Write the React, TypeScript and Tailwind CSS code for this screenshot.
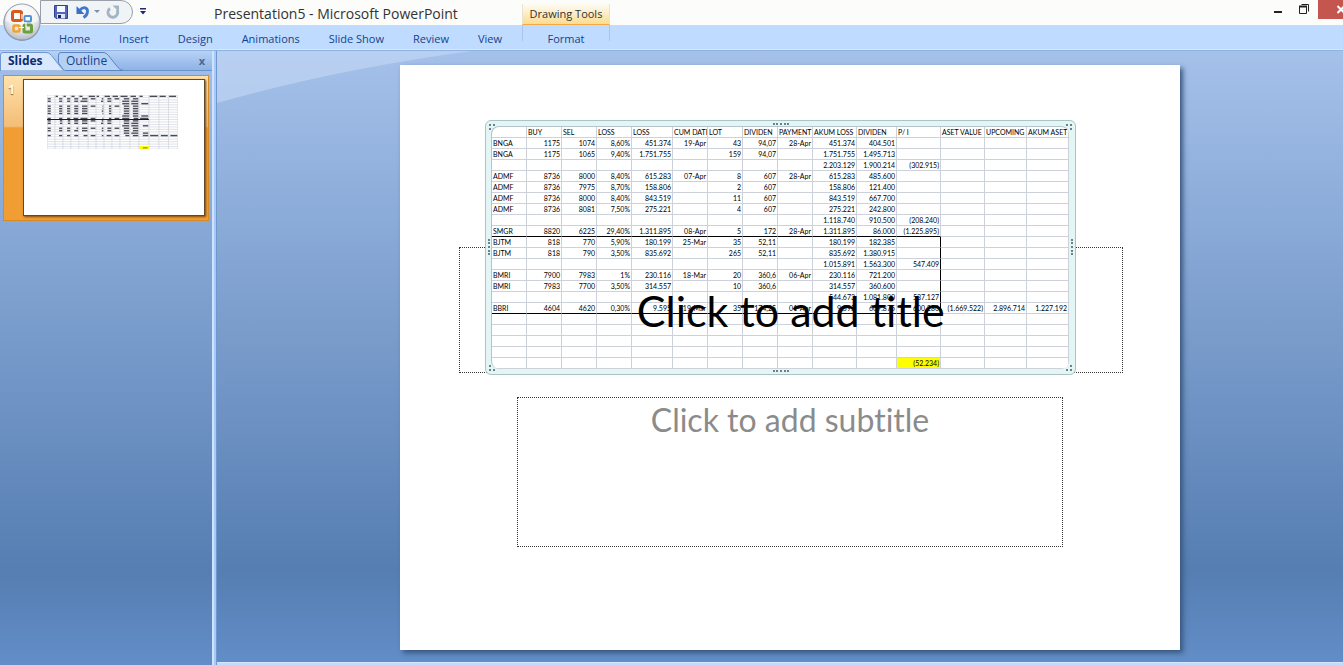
import React from 'react'

const menuTabs = ['Home', 'Insert', 'Design', 'Animations', 'Slide Show', 'Review', 'View']

const headers = [
  '', 'BUY', 'SEL', 'LOSS', 'LOSS', 'CUM DATE', 'LOT', 'DIVIDEN', 'PAYMENT',
  'AKUM LOSS', 'DIVIDEN', 'P/ I', 'ASET VALUE', 'UPCOMING', 'AKUM ASET',
]

const columnWidths = [35, 35, 35, 35, 41, 35, 35, 35, 35, 44, 40, 44, 44, 42, 42]

const rows: string[][] = [
  ['BNGA', '1175', '1074', '8,60%', '451.374', '19-Apr', '43', '94,07', '28-Apr', '451.374', '404.501'],
  ['BNGA', '1175', '1065', '9,40%', '1.751.755', '', '159', '94,07', '', '1.751.755', '1.495.713'],
  ['', '', '', '', '', '', '', '', '', '2.203.129', '1.900.214', '(302.915)'],
  ['ADMF', '8736', '8000', '8,40%', '615.283', '07-Apr', '8', '607', '28-Apr', '615.283', '485.600'],
  ['ADMF', '8736', '7975', '8,70%', '158.806', '', '2', '607', '', '158.806', '121.400'],
  ['ADMF', '8736', '8000', '8,40%', '843.519', '', '11', '607', '', '843.519', '667.700'],
  ['ADMF', '8736', '8081', '7,50%', '275.221', '', '4', '607', '', '275.221', '242.800'],
  ['', '', '', '', '', '', '', '', '', '1.118.740', '910.500', '(208.240)'],
  ['SMGR', '8820', '6225', '29,40%', '1.311.895', '08-Apr', '5', '172', '28-Apr', '1.311.895', '86.000', '(1.225.895)'],
  ['BJTM', '818', '770', '5,90%', '180.199', '25-Mar', '35', '52,11', '', '180.199', '182.385'],
  ['BJTM', '818', '790', '3,50%', '835.692', '', '265', '52,11', '', '835.692', '1.380.915'],
  ['', '', '', '', '', '', '', '', '', '1.015.891', '1.563.300', '547.409'],
  ['BMRI', '7900', '7983', '1%', '230.116', '18-Mar', '20', '360,6', '06-Apr', '230.116', '721.200'],
  ['BMRI', '7983', '7700', '3,50%', '314.557', '', '10', '360,6', '', '314.557', '360.600'],
  ['', '', '', '', '', '', '', '', '', '544.673', '1.081.800', '537.127'],
  ['BBRI', '4604', '4620', '0,30%', '9.595', '19-Mar', '35', '174,25', '01-Apr', '9.595', '609.875', '600.280', '(1.669.522)', '2.896.714', '1.227.192'],
  [],
  [],
  [],
  [],
  ['', '', '', '', '', '', '', '', '', '', '', '(52.234)'],
]

// the boxed block runs from below SMGR to below BBRI
const BOX_START = 8
const BOX_END = 15
const BOX_LAST_COLUMN = 11

function cellClass(row: number, col: number) {
  const inBox = col <= BOX_LAST_COLUMN
  const classes = ['h-[11px] overflow-hidden whitespace-nowrap border-b border-r px-px py-0']
  classes.push(col === 0 ? 'text-left' : 'text-right')
  classes.push(
    inBox && (row === BOX_START || row === BOX_END) ? 'border-b-black' : 'border-b-[#cdd1d9]'
  )
  classes.push(
    col === BOX_LAST_COLUMN && row > BOX_START && row <= BOX_END
      ? 'border-r-black'
      : 'border-r-[#cdd1d9]'
  )
  if (row === rows.length - 1 && col === BOX_LAST_COLUMN) classes.push('bg-[#ffff00]')
  return classes.join(' ')
}

function OfficeLogo() {
  return (
    <svg viewBox="0 0 40 40" className="size-10" aria-hidden="true">
      <defs>
        <radialGradient id="orb" cx="50%" cy="35%" r="65%">
          <stop offset="0%" stopColor="#ffffff" />
          <stop offset="60%" stopColor="#e6e8ec" />
          <stop offset="100%" stopColor="#b4bcc8" />
        </radialGradient>
      </defs>
      <circle cx="20" cy="20.5" r="18.5" fill="#8c9bb0" />
      <circle cx="20" cy="20" r="18" fill="url(#orb)" stroke="#8e9aaa" />
      <path d="M3.5 19a16.5 16.5 0 0 1 33 0c-8 4-25 4-33 0z" fill="#fff" opacity=".55" />
      <g fill="none" strokeLinejoin="round">
        <rect x="10.5" y="9.5" width="9" height="9" rx="1.5" stroke="#d9581c" strokeWidth="3" />
        <rect x="22.5" y="14" width="6.5" height="5.5" rx="1" stroke="#4f94d4" strokeWidth="2" />
        <rect x="11.5" y="23.5" width="6" height="6" rx="1" stroke="#f1a22e" strokeWidth="2.5" />
        <rect x="22" y="23" width="7.5" height="7" rx="1" stroke="#6da03a" strokeWidth="3" />
        <path d="M20 12v5M24 20v5M15 21.5h4M17 25.5h5" stroke="#fff" strokeWidth="1.2" />
      </g>
    </svg>
  )
}

function SaveIcon() {
  return (
    <svg viewBox="0 0 16 16" className="size-4" aria-hidden="true">
      <path d="M1.5 1.5h13v13H3l-1.5-1.5z" fill="#5467c0" stroke="#343f8f" />
      <path d="M4 2h8v6H4z" fill="#f4f8ff" />
      <path d="M4 10h8v4.5H4z" fill="#dfe4f2" />
      <path d="M5 11h3v3H5z" fill="#1d2458" />
    </svg>
  )
}

function UndoIcon() {
  return (
    <svg viewBox="0 0 16 16" className="size-4" aria-hidden="true">
      <path d="M5 6c3.5-4 8-2.5 7.5 2-.3 2.5-1.5 4-4 5.5" fill="none" stroke="#4379c9" strokeWidth="2.8" />
      <path d="M1.5 2v8h8z" fill="#3a6fc4" />
    </svg>
  )
}

function RedoIcon() {
  return (
    <svg viewBox="0 0 16 16" className="size-4" aria-hidden="true">
      <path d="M5 4.5A4.8 4.8 0 1 0 12 6" fill="none" stroke="#a3b5c5" strokeWidth="3" />
      <path d="M7.5 1.5H14V8z" fill="#a3b5c5" />
    </svg>
  )
}

function TitleBar() {
  return (
    <header className="flex h-[25px] items-start bg-[#fcfcfb] pl-10 text-[#333]">
      <div className="flex h-6 w-[93px] items-center rounded-r-full border border-[#999fa8] bg-[#f1f4f7] pl-3">
        <button aria-label="Save" className="w-[22px]"><SaveIcon /></button>
        <button aria-label="Undo"><UndoIcon /></button>
        <button aria-label="Undo list" className="px-[3px]">
          <svg viewBox="0 0 6 4" className="h-1 w-[6px]"><path d="M0 0h6L3 3z" fill="#7d8fae" /></svg>
        </button>
        <button aria-label="Repeat" className="pl-[2px]"><RedoIcon /></button>
      </div>
      <button aria-label="Customize Quick Access Toolbar" className="ml-[7px] mt-2">
        <svg viewBox="0 0 6 7" className="h-[7px] w-[6px]"><path d="M0 0h6v1.5H0zM0 3h6L3 6.5z" fill="#1c2a72" /></svg>
      </button>
      <h1 className="ml-[68px] w-[308px] whitespace-nowrap pt-1 text-[14px] leading-5">Presentation5 - Microsoft PowerPoint</h1>
      <div className="mt-1 h-[21px] w-[88px] whitespace-nowrap border-x border-b border-x-[#e8e4d4] border-b-[#f3a93f] bg-linear-to-b from-[#fdfbf2] to-[#fbdc90] text-center text-[11px] leading-5">
        Drawing Tools
      </div>
      <div className="ml-auto flex h-[19px] items-center">
        <button aria-label="Minimize" className="w-[26px]">
          <svg viewBox="0 0 26 19" className="h-[19px] w-[26px]"><path d="M9 11h8v2H9z" fill="#222" /></svg>
        </button>
        <button aria-label="Restore Down" className="w-[27px]">
          <svg viewBox="0 0 27 19" className="h-[19px] w-[27px]" fill="none" stroke="#222">
            <path d="M8.5 6.5h7v7h-7zM10.5 4.5h7v7" />
            <path d="M8 6.5h8" strokeWidth="2" />
          </svg>
        </button>
        <button aria-label="Close" className="h-[19px] w-[25px] bg-[#c4564f]">
          <svg viewBox="0 0 25 19" className="h-[19px] w-[25px]"><path d="M19.5 6l7 7m0-7l-7 7" stroke="#fff" strokeWidth="2" /></svg>
        </button>
      </div>
    </header>
  )
}

function Ribbon() {
  return (
    <nav className="flex h-[26px] items-start gap-[29px] border-b border-[#8fb1e3] bg-[#bfdbff] pl-[59px] text-[11px] leading-7 text-[#15428b] shadow-[inset_0_-1px_0_#d7e8ff]">
      {menuTabs.map((tab) => (
        <button key={tab} className="whitespace-nowrap">{tab}</button>
      ))}
      <button className="-ml-[9px] h-4 w-[88px] border-x border-[#a9c5e6]">Format</button>
    </nav>
  )
}

function ThumbnailTable() {
  const total = columnWidths.reduce((sum, w) => sum + w, 0)
  const edges = columnWidths.map((_, i) => columnWidths.slice(0, i).reduce((sum, w) => sum + w, 0))

  return (
    <svg viewBox={`0 0 ${total} 242`} preserveAspectRatio="none" className="h-[54px] w-[131px]" aria-hidden="true">
      <path
        d={[...edges, total].map((x) => `M${x} 0V242`).join('') + Array.from({ length: 23 }, (_, i) => `M0 ${i * 11}H${total}`).join('')}
        stroke="#c6cad6"
        strokeWidth="2.5"
        fill="none"
      />
      {[headers, ...rows].map((row, r) =>
        row.map((text, c) => {
          if (!text) return null
          const width = Math.min(text.length * 3.4, columnWidths[c] - 8)
          const x = r === 0 || c === 0 ? edges[c] + 3 : edges[c] + columnWidths[c] - width - 3
          return <rect key={`${r}-${c}`} x={x} y={r * 11 + 3} width={width} height="6" fill="#1b1d2c" opacity=".8" />
        })
      )}
      <path d="M0 110H449" stroke="#000" strokeWidth="4" />
      <rect x="405" y="229" width="44" height="13" fill="#ff0" />
      <path d="M422 237H443" stroke="#333" strokeWidth="3" />
    </svg>
  )
}

function SlidesPane() {
  return (
    <aside className="flex w-[212px] shrink-0 flex-col bg-linear-to-b from-[#a1bfe9] via-[#567eb2] via-85% to-[#628dc7]">
      <div className="relative flex h-5 border-b border-[#6a92cc] bg-linear-to-b from-[#b7d2f6] to-[#8fb3e5] text-[12px] leading-5 text-[#15428b]">
        <svg viewBox="0 0 124 20" className="absolute left-0 top-0 h-5 w-[124px]" aria-hidden="true">
          <path d="M64 19.5L58.5 12V4Q58.5 1.5 61 1.5H103c3 0 5 2 7 5l8 10q2 2.5 5 3z" fill="#b5d0f5" stroke="#5b84c4" />
          <path d="M.5 20V4Q.5 1.5 3 1.5h43c3 0 5 2 7 5l8 10q2 3 5 3.5z" fill="#d9e8fc" stroke="#6f95cf" />
        </svg>
        <button className="relative w-[58px] pl-2 text-left font-bold text-[#0c2a73]">Slides</button>
        <button className="relative pl-2">Outline</button>
        <button aria-label="Close pane" className="ml-auto mr-[7px] text-[11px] font-bold leading-none text-[#4a6793]">x</button>
      </div>
      <div className="mx-[3px] mt-1 flex border border-[#d98a22] bg-linear-to-b from-[#ffe2ab] via-[#f3bd75] via-35% to-[#f09d33] to-36% pb-1 pr-[3px] pt-[3px]">
        <span className="w-[19px] shrink-0 pl-1 pt-[3px] text-[12px] font-bold leading-4 text-white [text-shadow:0_1px_1px_#7a5310]">1</span>
        <div className="flex aspect-[4/3] flex-1 justify-center border border-[#5f4a2c] bg-white pt-[15px] shadow-[1px_1px_2px_#7a4a10]">
          <div className="-ml-1"><ThumbnailTable /></div>
        </div>
      </div>
    </aside>
  )
}

function Grip({ className }: { className: string }) {
  return <span className={`absolute border-dotted border-[#6c8288] ${className}`} />
}

function HoldingsTable() {
  return (
    <div className="absolute left-[10.9%] top-[9.4%] rounded-md border border-[#a9c4c6] bg-[#e4f5f5] py-[5px] pl-[5px] pr-[6px] text-black">
      <div className="overflow-hidden rounded-lg border-l border-t border-[#b5c4ca] bg-white">
        <table className="w-[577px] table-fixed border-separate border-spacing-0 text-[7px] leading-[10px]">
          <colgroup>
            {columnWidths.map((width, i) => (
              <col key={i} style={{ width }} />
            ))}
          </colgroup>
          <thead>
            <tr>
              {headers.map((label, i) => (
                <th key={i} className="h-[11px] overflow-hidden whitespace-nowrap border-b border-r border-[#cdd1d9] px-px py-0 text-left font-normal">
                  {label}
                </th>
              ))}
            </tr>
          </thead>
          <tbody>
            {rows.map((row, r) => (
              <tr key={r}>
                {headers.map((_, c) => (
                  <td key={c} className={cellClass(r, c)}>{row[c]}</td>
                ))}
              </tr>
            ))}
          </tbody>
        </table>
      </div>
      <Grip className="left-1/2 top-[2px] w-4 -translate-x-1/2 border-t-2" />
      <Grip className="bottom-[2px] left-1/2 w-4 -translate-x-1/2 border-t-2" />
      <Grip className="left-[2px] top-1/2 h-4 -translate-y-1/2 border-l-2" />
      <Grip className="right-[2px] top-1/2 h-4 -translate-y-1/2 border-l-2" />
      <Grip className="left-[3px] top-[3px] size-[6px] border-l-2 border-t-2" />
      <Grip className="right-[3px] top-[3px] size-[6px] border-r-2 border-t-2" />
      <Grip className="bottom-[3px] left-[3px] size-[6px] border-b-2 border-l-2" />
      <Grip className="bottom-[3px] right-[3px] size-[6px] border-b-2 border-r-2" />
    </div>
  )
}

function SlideCanvas() {
  return (
    <main className="relative flex min-w-0 flex-1 justify-center border-b border-[#d5e7ff] bg-linear-to-b from-[#a5c1ea] via-[#567eb2] via-85% to-[#628dc7] pb-3 pl-5 pt-[14px]">
      <svg viewBox="0 0 260 52" className="absolute left-0 top-0 h-[52px] w-[260px]" aria-hidden="true">
        <path d="M0 0H255Q120 18 0 52z" fill="#c4d9f5" opacity=".6" />
      </svg>
      <section className="relative aspect-[4/3] h-full bg-white font-[Lato,sans-serif] shadow-[3px_3px_5px_#38577f] [font-variant-ligatures:none]">
        {/* placeholder outline sits behind the table, its prompt shows through */}
        <div className="absolute left-[7.5%] top-[31.1%] flex h-[21.6%] w-[85.2%] items-center justify-center border border-dotted border-[#333] text-center text-[43px] leading-none text-black">
          <span className="relative z-10">Click to add title</span>
        </div>
        <HoldingsTable />
        <div className="absolute left-[15%] top-[56.7%] h-[25.7%] w-[70%] border border-dotted border-[#333] pt-[2px] text-center text-[32px] leading-10 text-[#8b8b8b]">
          Click to add subtitle
        </div>
      </section>
    </main>
  )
}

export default function App() {
  return (
    <div className="relative flex h-screen flex-col overflow-hidden bg-[#bfdbff] font-['Open_Sans',sans-serif]">
      <TitleBar />
      <Ribbon />
      <button aria-label="Office Button" className="absolute left-[2px] top-[2px]">
        <OfficeLogo />
      </button>
      <div className="flex min-h-0 flex-1">
        <SlidesPane />
        <div className="w-[5px] shrink-0 border-l-2 border-r border-l-[#cfe3ff] border-r-[#6f97d0] bg-[#a8caf8]" />
        <div className="flex min-w-0 flex-1 pb-[2px]">
          <SlideCanvas />
        </div>
      </div>
    </div>
  )
}
